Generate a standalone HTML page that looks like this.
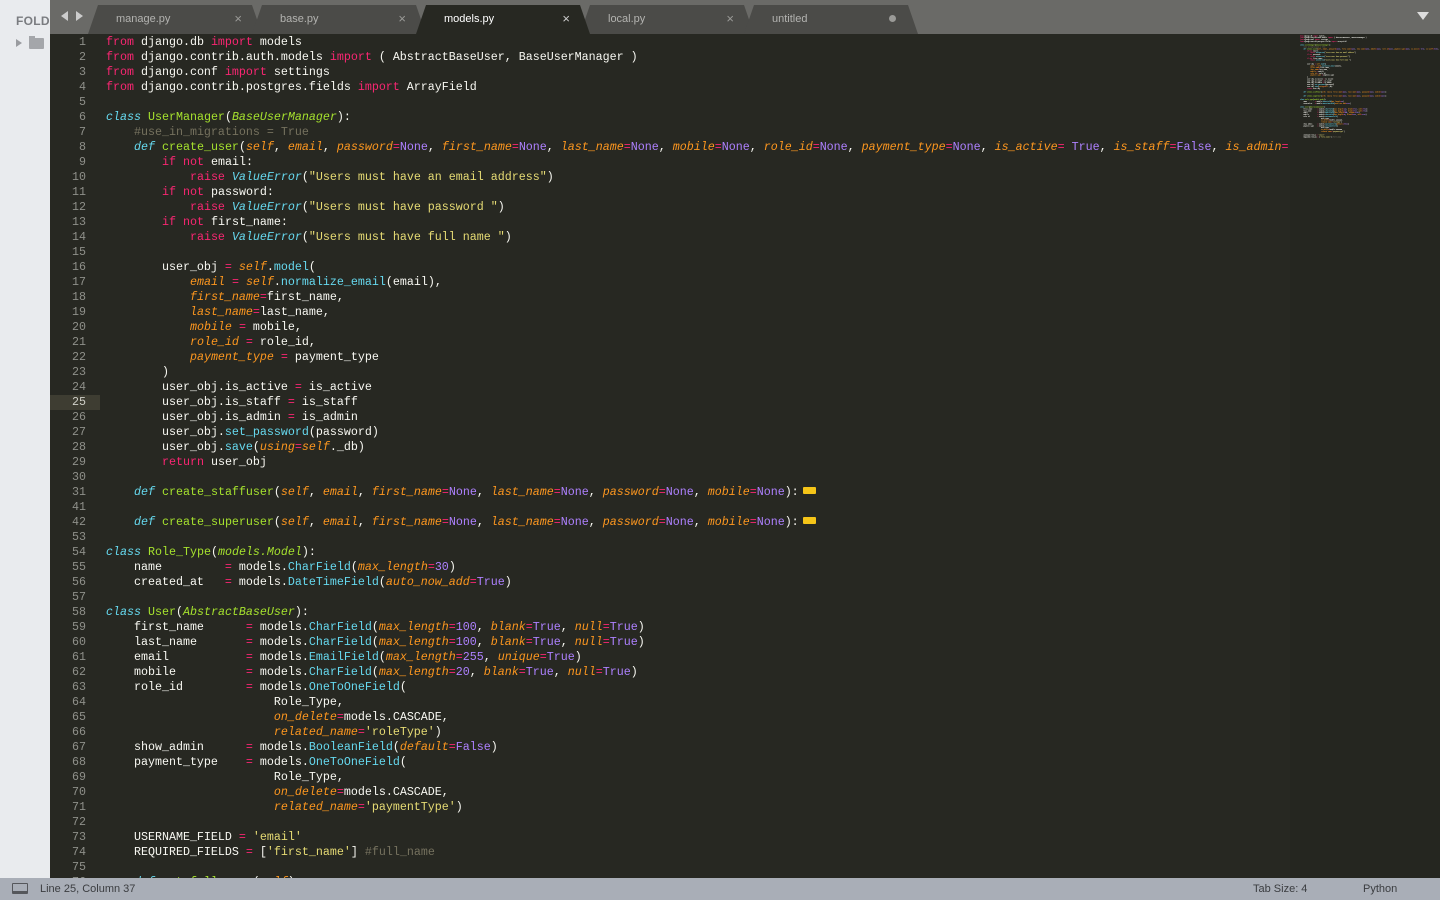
<!DOCTYPE html>
<html><head><meta charset="utf-8"><style>
*{margin:0;padding:0;box-sizing:border-box}
body{width:1440px;height:900px;overflow:hidden;background:#272822;font-family:"Liberation Sans",sans-serif;position:relative}
#side{position:absolute;left:0;top:0;width:50px;height:878px;background:#e9ebee;overflow:hidden}
#side .fold{position:absolute;left:16px;top:14px;font-size:12px;font-weight:bold;color:#7a7c80;letter-spacing:.3px}
#tabbar{position:absolute;left:50px;top:0;width:1390px;height:34px;background:#6a6a67}
.tab{position:absolute;top:5px;height:29px;background:#4b4b48;clip-path:polygon(10px 0,calc(100% - 10px) 0,100% 100%,0 100%)}
.tab.act{background:#272822}
.tab span{position:absolute;top:8px;font-size:11px;color:#b3b3b0}
.tab.act span{color:#fff}
.tab i{position:absolute;top:6px;right:20px;font-style:normal;font-size:13px;color:#9a9a97}
.tab.act i{color:#ccc}
#gutter{position:absolute;left:50px;top:35px;width:50px;height:843px}
#code,#mini{font-family:"Liberation Mono",monospace;font-size:11.67px;line-height:15px;color:#f8f8f2;white-space:pre}
#code{position:absolute;left:106px;top:35px;width:1182px;height:843px;overflow:hidden}
.ln{position:absolute;left:0;width:36px;text-align:right;font-family:"Liberation Mono",monospace;font-size:11.67px;line-height:15px;color:#8f908a;white-space:pre}
.k{color:#f92672}.s{color:#66d9ef;font-style:italic}.f{color:#a6e22e}.i{color:#a6e22e;font-style:italic}
.p{color:#fd971f;font-style:italic}.c{color:#ae81ff}.q{color:#e6db74}.cm{color:#75715e}.b{color:#66d9ef}.x{color:#66d9ef;font-style:italic}
.mk{display:inline-block;width:13px;height:7px;background:#f5c518;border-radius:1px;vertical-align:1px;margin-left:4px}
#minimap{position:absolute;left:1290px;top:34px;width:150px;height:844px;background:#252620;overflow:hidden}
#mini{position:absolute;left:10px;top:1px;transform:scale(.125);transform-origin:0 0;font-weight:bold}
#status{position:absolute;left:0;top:878px;width:1440px;height:22px;background:#a9aeb7;font-size:11px;color:#3b3d40}
#status span{position:absolute;top:5px}
</style></head><body>
<div id="side"><div class="fold">FOLDERS</div>
<div style="position:absolute;left:16px;top:39px;width:0;height:0;border-left:6px solid #9a9ca0;border-top:4px solid transparent;border-bottom:4px solid transparent"></div>
<div style="position:absolute;left:29px;top:38px;width:15px;height:11px;background:#a4a6aa;border-radius:1px"></div>
<div style="position:absolute;left:29px;top:36px;width:6px;height:3px;background:#a4a6aa"></div>
</div>
<div id="tabbar">
<div style="position:absolute;left:11px;top:11px;width:0;height:0;border-right:7px solid #ccc;border-top:5px solid transparent;border-bottom:5px solid transparent"></div>
<div style="position:absolute;left:26px;top:11px;width:0;height:0;border-left:7px solid #ccc;border-top:5px solid transparent;border-bottom:5px solid transparent"></div>
<div class="tab" style="left:38px;width:174px"><span style="left:28px">manage.py</span><i>×</i></div>
<div class="tab" style="left:202px;width:174px"><span style="left:28px">base.py</span><i>×</i></div>
<div class="tab" style="left:530px;width:174px"><span style="left:28px">local.py</span><i>×</i></div>
<div class="tab" style="left:694px;width:174px"><span style="left:28px">untitled</span><i style="top:10px;width:7px;height:7px;border-radius:50%;background:#9a9a97;right:22px"></i></div>
<div class="tab act" style="left:366px;width:174px"><span style="left:28px">models.py</span><i>×</i></div>
<div style="position:absolute;left:1367px;top:12px;width:0;height:0;border-top:8px solid #ddd;border-left:6px solid transparent;border-right:6px solid transparent"></div>
</div>
<div id="gutter">
<div style="position:absolute;left:0;top:360px;width:50px;height:15px;background:#3e3d32"></div>
<div class="ln" style="top:0">1
2
3
4
5
6
7
8
9
10
11
12
13
14
15
16
17
18
19
20
21
22
23
24
<span style="color:#d0d0c8">25</span>
26
27
28
29
30
31
41
42
53
54
55
56
57
58
59
60
61
62
63
64
65
66
67
68
69
70
71
72
73
74
75
76</div>
</div>
<div id="code"><span class="k">from</span> django.db <span class="k">import</span> models
<span class="k">from</span> django.contrib.auth.models <span class="k">import</span> ( AbstractBaseUser, BaseUserManager )
<span class="k">from</span> django.conf <span class="k">import</span> settings
<span class="k">from</span> django.contrib.postgres.fields <span class="k">import</span> ArrayField

<span class="s">class</span> <span class="f">UserManager</span>(<span class="i">BaseUserManager</span>):
    <span class="cm">#use_in_migrations = True</span>
    <span class="s">def</span> <span class="f">create_user</span>(<span class="p">self</span>, <span class="p">email</span>, <span class="p">password</span><span class="k">=</span><span class="c">None</span>, <span class="p">first_name</span><span class="k">=</span><span class="c">None</span>, <span class="p">last_name</span><span class="k">=</span><span class="c">None</span>, <span class="p">mobile</span><span class="k">=</span><span class="c">None</span>, <span class="p">role_id</span><span class="k">=</span><span class="c">None</span>, <span class="p">payment_type</span><span class="k">=</span><span class="c">None</span>, <span class="p">is_active</span><span class="k">=</span> <span class="c">True</span>, <span class="p">is_staff</span><span class="k">=</span><span class="c">False</span>, <span class="p">is_admin</span><span class="k">=</span><span class="c">False</span>):
        <span class="k">if</span> <span class="k">not</span> email:
            <span class="k">raise</span> <span class="x">ValueError</span>(<span class="q">"Users must have an email address"</span>)
        <span class="k">if</span> <span class="k">not</span> password:
            <span class="k">raise</span> <span class="x">ValueError</span>(<span class="q">"Users must have password "</span>)
        <span class="k">if</span> <span class="k">not</span> first_name:
            <span class="k">raise</span> <span class="x">ValueError</span>(<span class="q">"Users must have full name "</span>)

        user_obj <span class="k">=</span> <span class="p">self</span>.<span class="b">model</span>(
            <span class="p">email</span> <span class="k">=</span> <span class="p">self</span>.<span class="b">normalize_email</span>(email),
            <span class="p">first_name</span><span class="k">=</span>first_name,
            <span class="p">last_name</span><span class="k">=</span>last_name,
            <span class="p">mobile</span> <span class="k">=</span> mobile,
            <span class="p">role_id</span> <span class="k">=</span> role_id,
            <span class="p">payment_type</span> <span class="k">=</span> payment_type
        )
        user_obj.is_active <span class="k">=</span> is_active
        user_obj.is_staff <span class="k">=</span> is_staff
        user_obj.is_admin <span class="k">=</span> is_admin
        user_obj.<span class="b">set_password</span>(password)
        user_obj.<span class="b">save</span>(<span class="p">using</span><span class="k">=</span><span class="p">self</span>._db)
        <span class="k">return</span> user_obj

    <span class="s">def</span> <span class="f">create_staffuser</span>(<span class="p">self</span>, <span class="p">email</span>, <span class="p">first_name</span><span class="k">=</span><span class="c">None</span>, <span class="p">last_name</span><span class="k">=</span><span class="c">None</span>, <span class="p">password</span><span class="k">=</span><span class="c">None</span>, <span class="p">mobile</span><span class="k">=</span><span class="c">None</span>):<span class="mk"></span>

    <span class="s">def</span> <span class="f">create_superuser</span>(<span class="p">self</span>, <span class="p">email</span>, <span class="p">first_name</span><span class="k">=</span><span class="c">None</span>, <span class="p">last_name</span><span class="k">=</span><span class="c">None</span>, <span class="p">password</span><span class="k">=</span><span class="c">None</span>, <span class="p">mobile</span><span class="k">=</span><span class="c">None</span>):<span class="mk"></span>

<span class="s">class</span> <span class="f">Role_Type</span>(<span class="i">models.Model</span>):
    name         <span class="k">=</span> models.<span class="b">CharField</span>(<span class="p">max_length</span><span class="k">=</span><span class="c">30</span>)
    created_at   <span class="k">=</span> models.<span class="b">DateTimeField</span>(<span class="p">auto_now_add</span><span class="k">=</span><span class="c">True</span>)

<span class="s">class</span> <span class="f">User</span>(<span class="i">AbstractBaseUser</span>):
    first_name      <span class="k">=</span> models.<span class="b">CharField</span>(<span class="p">max_length</span><span class="k">=</span><span class="c">100</span>, <span class="p">blank</span><span class="k">=</span><span class="c">True</span>, <span class="p">null</span><span class="k">=</span><span class="c">True</span>)
    last_name       <span class="k">=</span> models.<span class="b">CharField</span>(<span class="p">max_length</span><span class="k">=</span><span class="c">100</span>, <span class="p">blank</span><span class="k">=</span><span class="c">True</span>, <span class="p">null</span><span class="k">=</span><span class="c">True</span>)
    email           <span class="k">=</span> models.<span class="b">EmailField</span>(<span class="p">max_length</span><span class="k">=</span><span class="c">255</span>, <span class="p">unique</span><span class="k">=</span><span class="c">True</span>)
    mobile          <span class="k">=</span> models.<span class="b">CharField</span>(<span class="p">max_length</span><span class="k">=</span><span class="c">20</span>, <span class="p">blank</span><span class="k">=</span><span class="c">True</span>, <span class="p">null</span><span class="k">=</span><span class="c">True</span>)
    role_id         <span class="k">=</span> models.<span class="b">OneToOneField</span>(
                        Role_Type,
                        <span class="p">on_delete</span><span class="k">=</span>models.CASCADE,
                        <span class="p">related_name</span><span class="k">=</span><span class="q">'roleType'</span>)
    show_admin      <span class="k">=</span> models.<span class="b">BooleanField</span>(<span class="p">default</span><span class="k">=</span><span class="c">False</span>)
    payment_type    <span class="k">=</span> models.<span class="b">OneToOneField</span>(
                        Role_Type,
                        <span class="p">on_delete</span><span class="k">=</span>models.CASCADE,
                        <span class="p">related_name</span><span class="k">=</span><span class="q">'paymentType'</span>)

    USERNAME_FIELD <span class="k">=</span> <span class="q">'email'</span>
    REQUIRED_FIELDS <span class="k">=</span> [<span class="q">'first_name'</span>] <span class="cm">#full_name</span>

    <span class="s">def</span> <span class="f">get_full_name</span>(<span class="p">self</span>):
</div>
<div id="minimap"><div id="mini"><span class="k">from</span> django.db <span class="k">import</span> models
<span class="k">from</span> django.contrib.auth.models <span class="k">import</span> ( AbstractBaseUser, BaseUserManager )
<span class="k">from</span> django.conf <span class="k">import</span> settings
<span class="k">from</span> django.contrib.postgres.fields <span class="k">import</span> ArrayField

<span class="s">class</span> <span class="f">UserManager</span>(<span class="i">BaseUserManager</span>):
    <span class="cm">#use_in_migrations = True</span>
    <span class="s">def</span> <span class="f">create_user</span>(<span class="p">self</span>, <span class="p">email</span>, <span class="p">password</span><span class="k">=</span><span class="c">None</span>, <span class="p">first_name</span><span class="k">=</span><span class="c">None</span>, <span class="p">last_name</span><span class="k">=</span><span class="c">None</span>, <span class="p">mobile</span><span class="k">=</span><span class="c">None</span>, <span class="p">role_id</span><span class="k">=</span><span class="c">None</span>, <span class="p">payment_type</span><span class="k">=</span><span class="c">None</span>, <span class="p">is_active</span><span class="k">=</span> <span class="c">True</span>, <span class="p">is_staff</span><span class="k">=</span><span class="c">False</span>, <span class="p">is_admin</span><span class="k">=</span><span class="c">False</span>):
        <span class="k">if</span> <span class="k">not</span> email:
            <span class="k">raise</span> <span class="x">ValueError</span>(<span class="q">"Users must have an email address"</span>)
        <span class="k">if</span> <span class="k">not</span> password:
            <span class="k">raise</span> <span class="x">ValueError</span>(<span class="q">"Users must have password "</span>)
        <span class="k">if</span> <span class="k">not</span> first_name:
            <span class="k">raise</span> <span class="x">ValueError</span>(<span class="q">"Users must have full name "</span>)

        user_obj <span class="k">=</span> <span class="p">self</span>.<span class="b">model</span>(
            <span class="p">email</span> <span class="k">=</span> <span class="p">self</span>.<span class="b">normalize_email</span>(email),
            <span class="p">first_name</span><span class="k">=</span>first_name,
            <span class="p">last_name</span><span class="k">=</span>last_name,
            <span class="p">mobile</span> <span class="k">=</span> mobile,
            <span class="p">role_id</span> <span class="k">=</span> role_id,
            <span class="p">payment_type</span> <span class="k">=</span> payment_type
        )
        user_obj.is_active <span class="k">=</span> is_active
        user_obj.is_staff <span class="k">=</span> is_staff
        user_obj.is_admin <span class="k">=</span> is_admin
        user_obj.<span class="b">set_password</span>(password)
        user_obj.<span class="b">save</span>(<span class="p">using</span><span class="k">=</span><span class="p">self</span>._db)
        <span class="k">return</span> user_obj

    <span class="s">def</span> <span class="f">create_staffuser</span>(<span class="p">self</span>, <span class="p">email</span>, <span class="p">first_name</span><span class="k">=</span><span class="c">None</span>, <span class="p">last_name</span><span class="k">=</span><span class="c">None</span>, <span class="p">password</span><span class="k">=</span><span class="c">None</span>, <span class="p">mobile</span><span class="k">=</span><span class="c">None</span>):

    <span class="s">def</span> <span class="f">create_superuser</span>(<span class="p">self</span>, <span class="p">email</span>, <span class="p">first_name</span><span class="k">=</span><span class="c">None</span>, <span class="p">last_name</span><span class="k">=</span><span class="c">None</span>, <span class="p">password</span><span class="k">=</span><span class="c">None</span>, <span class="p">mobile</span><span class="k">=</span><span class="c">None</span>):

<span class="s">class</span> <span class="f">Role_Type</span>(<span class="i">models.Model</span>):
    name         <span class="k">=</span> models.<span class="b">CharField</span>(<span class="p">max_length</span><span class="k">=</span><span class="c">30</span>)
    created_at   <span class="k">=</span> models.<span class="b">DateTimeField</span>(<span class="p">auto_now_add</span><span class="k">=</span><span class="c">True</span>)

<span class="s">class</span> <span class="f">User</span>(<span class="i">AbstractBaseUser</span>):
    first_name      <span class="k">=</span> models.<span class="b">CharField</span>(<span class="p">max_length</span><span class="k">=</span><span class="c">100</span>, <span class="p">blank</span><span class="k">=</span><span class="c">True</span>, <span class="p">null</span><span class="k">=</span><span class="c">True</span>)
    last_name       <span class="k">=</span> models.<span class="b">CharField</span>(<span class="p">max_length</span><span class="k">=</span><span class="c">100</span>, <span class="p">blank</span><span class="k">=</span><span class="c">True</span>, <span class="p">null</span><span class="k">=</span><span class="c">True</span>)
    email           <span class="k">=</span> models.<span class="b">EmailField</span>(<span class="p">max_length</span><span class="k">=</span><span class="c">255</span>, <span class="p">unique</span><span class="k">=</span><span class="c">True</span>)
    mobile          <span class="k">=</span> models.<span class="b">CharField</span>(<span class="p">max_length</span><span class="k">=</span><span class="c">20</span>, <span class="p">blank</span><span class="k">=</span><span class="c">True</span>, <span class="p">null</span><span class="k">=</span><span class="c">True</span>)
    role_id         <span class="k">=</span> models.<span class="b">OneToOneField</span>(
                        Role_Type,
                        <span class="p">on_delete</span><span class="k">=</span>models.CASCADE,
                        <span class="p">related_name</span><span class="k">=</span><span class="q">'roleType'</span>)
    show_admin      <span class="k">=</span> models.<span class="b">BooleanField</span>(<span class="p">default</span><span class="k">=</span><span class="c">False</span>)
    payment_type    <span class="k">=</span> models.<span class="b">OneToOneField</span>(
                        Role_Type,
                        <span class="p">on_delete</span><span class="k">=</span>models.CASCADE,
                        <span class="p">related_name</span><span class="k">=</span><span class="q">'paymentType'</span>)

    USERNAME_FIELD <span class="k">=</span> <span class="q">'email'</span>
    REQUIRED_FIELDS <span class="k">=</span> [<span class="q">'first_name'</span>] <span class="cm">#full_name</span>
</div></div>
<div id="status">
<div style="position:absolute;left:12px;top:5px;width:16px;height:11px;border:1.5px solid #55575b;border-bottom-width:3px;border-radius:1px"></div>
<span style="left:40px">Line 25, Column 37</span>
<span style="left:1253px">Tab Size: 4</span>
<span style="left:1363px">Python</span>
</div>
</body></html>
